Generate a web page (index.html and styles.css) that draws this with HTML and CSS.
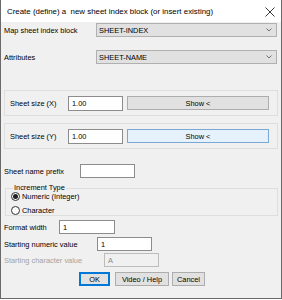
FILE: index.html
```html
<!DOCTYPE html>
<html>
<head>
<meta charset="utf-8">
<link rel="stylesheet" href="styles.css">
</head>
<body>
<div class="window">
  <div class="titlebar">
    <span class="title">Create (define) a&nbsp; new sheet index block (or insert existing)</span>
    <svg class="close" width="10" height="10" viewBox="0 0 10 10"><path d="M0.5 0.5 L9.5 9.5 M9.5 0.5 L0.5 9.5" stroke="#3a3a3a" stroke-width="1" fill="none"/></svg>
  </div>
  <div class="content">
    <div class="row r1">
      <span class="lbl w92">Map sheet index block</span>
      <div class="combo"><span>SHEET-INDEX</span><svg width="6" height="4" viewBox="0 0 6 4"><path d="M0.5 0.5 L3 3 L5.5 0.5" stroke="#707070" fill="none"/></svg></div>
    </div>
    <div class="row r2">
      <span class="lbl w92">Attributes</span>
      <div class="combo"><span>SHEET-NAME</span><svg width="6" height="4" viewBox="0 0 6 4"><path d="M0.5 0.5 L3 3 L5.5 0.5" stroke="#707070" fill="none"/></svg></div>
    </div>
    <div class="group g1">
      <span class="lbl w58">Sheet size (X)</span>
      <div class="input tall">1.00</div>
      <div class="btn show">Show &lt;</div>
    </div>
    <div class="group g2">
      <span class="lbl w58">Sheet size (Y)</span>
      <div class="input tall">1.00</div>
      <div class="btn show hot">Show &lt;</div>
    </div>
    <div class="row r3">
      <span class="lbl w76">Sheet name prefix</span>
      <div class="input w55"></div>
    </div>
    <fieldset class="inc">
      <legend>Increment Type</legend>
      <div class="radio"><span class="dot on"></span><span>Numeric (Integer)</span></div>
      <div class="radio"><span class="dot"></span><span>Character</span></div>
    </fieldset>
    <div class="row r4">
      <span class="lbl w55">Format width</span>
      <div class="input w56">1</div>
    </div>
    <div class="row r5">
      <span class="lbl w93">Starting numeric value</span>
      <div class="input w55">1</div>
    </div>
    <div class="row r6">
      <span class="lbl w100 dis">Starting character value</span>
      <div class="input w55 disabled">A</div>
    </div>
    <div class="buttons">
      <div class="btn ok">OK</div>
      <div class="btn vh">Video / Help</div>
      <div class="btn cancel">Cancel</div>
    </div>
  </div>
</div>
</body>
</html>
```
FILE: styles.css
```css
* { box-sizing: border-box; }
html, body { margin: 0; padding: 0; background: #ffffff; }
body {
  font-family: "Liberation Sans", Arial, sans-serif;
  font-size: 7.4px;
  color: #000;
}
.window {
  width: 282px;
  height: 299px;
  background: #f0f0f0;
  border: 1px solid #6a6a6a;
  border-top: none;
}
.titlebar {
  height: 22px;
  background: #ffffff;
  display: flex;
  align-items: center;
  padding-left: 6px;
  padding-right: 6px;
}
.title {
  font-size: 7.9px;
  flex: 1;
  white-space: nowrap;
}
.close { margin-top: 1px; }
.content {
  padding: 0 3px;
}
.row {
  display: flex;
  align-items: center;
}
.lbl { white-space: nowrap; flex: none; }
.w92 { width: 92px; }
.w58 { width: 58px; }
.w76 { width: 76px; }
.w55 { width: 55px; }
.w56 { width: 56px; }
.w93 { width: 93px; }
.w100 { width: 100px; }
.dis { color: #a2a2a2; }

.r1 { margin-top: 1px; height: 14px; }
.r2 { margin-top: 13px; height: 14px; }
.combo {
  width: 181px;
  height: 14px;
  background: #e1e1e1;
  border: 1px solid #b0b0b0;
  display: flex;
  align-items: center;
  justify-content: space-between;
  padding: 0 4px 0 2px;
}
.combo svg { flex: none; }

.group {
  display: flex;
  align-items: center;
  height: 26px;
  border: 1px solid #dedede;
  padding: 0 7px 0 5px;
}
.g1 { margin-top: 26px; }
.g2 { margin-top: 7px; }
.input {
  height: 14px;
  background: #fff;
  border: 1px solid #8c8c8c;
  display: flex;
  align-items: center;
  padding-left: 3px;
  flex: none;
}
.input.tall { width: 55px; height: 15px; margin-top: 1px; }
.input.disabled {
  background: #f0f0f0;
  border-color: #bcbcbc;
  color: #8a8a8a;
}
.btn {
  height: 14px;
  background: #e1e1e1;
  border: 1px solid #adadad;
  display: flex;
  align-items: center;
  justify-content: center;
  flex: none;
}
.show { width: 142px; margin-left: 4px; height: 14px; }
.show.hot { background: #e5f1fb; border-color: #7aa7d3; }

.r3 { margin-top: 15px; height: 14px; }
.inc {
  margin: 6px 0 0 1px;
  padding: 0 0 0 5px;
  height: 32px;
  border: 1px solid #dedede;
  min-width: 0;
}
.inc legend {
  padding: 0 1px;
  margin-left: 2px;
  line-height: 8px;
}
.radio {
  display: flex;
  align-items: center;
  height: 14px;
  margin-top: -3px;
}
.radio + .radio { margin-top: 0; }
.dot {
  width: 9px;
  height: 9px;
  border: 1px solid #333;
  border-radius: 50%;
  background: #fff;
  margin-right: 2px;
  display: flex;
  align-items: center;
  justify-content: center;
}
.dot.on::after {
  content: "";
  width: 5px;
  height: 5px;
  border-radius: 50%;
  background: #222;
}
.r4 { margin-top: 4px; height: 14px; }
.r5 { margin-top: 3px; height: 14px; }
.r6 { margin-top: 2px; height: 14px; }
.buttons {
  display: flex;
  margin-top: 5px;
  padding-left: 75px;
}
.ok { width: 31px; border: 1px solid #0078d7; box-shadow: inset 0 0 0 1px #0078d7; }
.vh { width: 54px; margin-left: 5px; }
.cancel { width: 33px; margin-left: 3px; }
```
